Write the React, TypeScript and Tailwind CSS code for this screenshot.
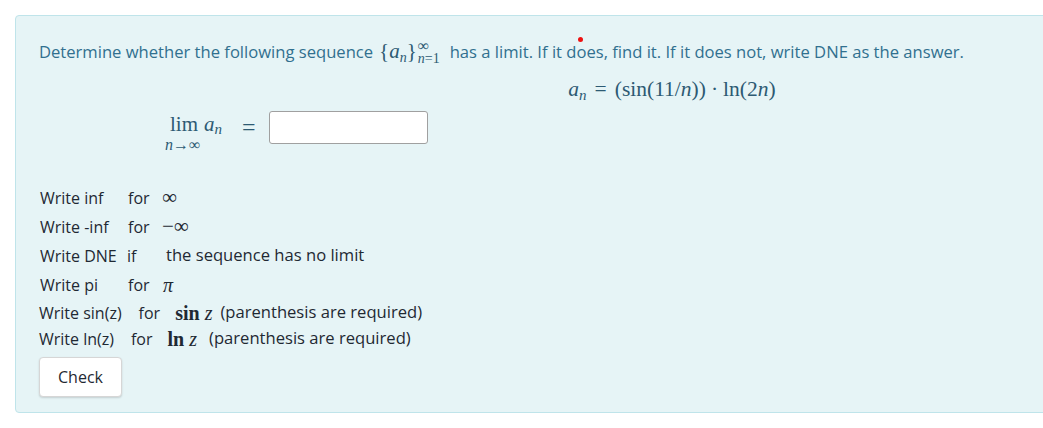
import React from "react";

function M({ children, className = "" }: { children: React.ReactNode; className?: string }) {
  return (
    <span className={`font-['Liberation_Serif',serif] ${className}`}>{children}</span>
  );
}

function I({ children }: { children: React.ReactNode }) {
  return <span className="italic">{children}</span>;
}

export default function App() {
  return (
    <div className="relative w-full h-[428px] overflow-hidden bg-white font-['Open_Sans',sans-serif] text-[16px]">
      <div className="absolute left-[578px] top-[37px] w-[5px] h-[5px] rounded-full bg-[#ee1111]" />
      <div className="pt-[15px] pl-[15px]">
        <div className="w-[1314px] h-[398px] rounded-[4px] border border-[#bfe4ea] bg-[#e6f4f6] px-[23px] pt-[23px]">
          <div className="h-[26px] flex items-center text-[#31708f] whitespace-nowrap text-[16.6px]">
            <span>Determine whether the following sequence</span>
            <M className="ml-[6px] text-[21px] text-[#2d5a73] inline-flex items-center">
              <span>{"{"}</span>
              <I>a</I>
              <span className="italic text-[14px] relative top-[5px]">n</span>
              <span>{"}"}</span>
              <span className="inline-flex flex-col ml-[1px] relative top-[1px]">
                <span className="text-[16px] leading-[12px]">∞</span>
                <span className="text-[14px] leading-[14px]"><I>n</I>=1</span>
              </span>
            </M>
            <span className="ml-[10px]">has a limit. If it does, find it. If it does not, write DNE as the answer.</span>
          </div>
          <div className="mt-[8px] h-[26px] flex justify-center text-[#2d5a73] whitespace-nowrap">
            <M className="text-[21.5px]">
              <I>a</I>
              <span className="italic text-[15px] relative top-[4px]">n</span>
              <span className="mx-[8px]">=</span>
              (sin(11/<I>n</I>))<span className="mx-[5px]">·</span>ln(2<I>n</I>)
            </M>
          </div>
          <div className="mt-[12px] ml-[131px] flex items-start text-[#2d5a73]">
            <M className="flex flex-col items-start">
              <span className="text-[21px] leading-[26px] flex items-baseline">
                lim
                <span className="ml-[6px]">
                  <I>a</I>
                  <span className="italic text-[15px] relative top-[3px]">n</span>
                </span>
              </span>
              <span className="text-[16px] leading-[12px] -ml-[5px]">
                <I>n</I>→∞
              </span>
            </M>
            <M className="text-[24px] leading-[26px] ml-[20px] mt-[3px]">=</M>
            <div className="ml-[13px] mt-[0px] w-[159px] h-[33px] bg-white border border-[#a0a0a0] rounded-[3px]" />
          </div>
          <div className="mt-[32px] text-[#1f2933]">
            <div className="flex h-[29px] items-center">
              <span className="w-[89px] pl-[1px]">Write inf</span>
              <span className="w-[34px]">for</span>
              <M className="text-[21px]">∞</M>
            </div>
            <div className="flex h-[29px] items-center">
              <span className="w-[89px] pl-[1px]">Write -inf</span>
              <span className="w-[34px]">for</span>
              <M className="text-[21px]">−∞</M>
            </div>
            <div className="flex h-[29px] items-center">
              <span className="w-[88px] pl-[1px]">Write DNE</span>
              <span className="w-[39px]">if</span>
              <span className="text-[16.6px]">the sequence has no limit</span>
            </div>
            <div className="flex h-[29px] items-center">
              <span className="w-[89px] pl-[1px]">Write pi</span>
              <span className="w-[35px]">for</span>
              <M className="text-[20px] italic">π</M>
            </div>
            <div className="flex h-[27px] items-center whitespace-nowrap">
              <span>Write sin(z)</span>
              <span className="ml-[17px]">for</span>
              <M className="ml-[15px] text-[20px]">
                <b>sin</b> <I>z</I>
              </M>
              <span className="ml-[8px] text-[16.6px]">(parenthesis are required)</span>
            </div>
            <div className="flex h-[25px] items-center whitespace-nowrap">
              <span>Write ln(z)</span>
              <span className="ml-[17px]">for</span>
              <M className="ml-[15px] text-[20px]">
                <b>ln</b> <I>z</I>
              </M>
              <span className="ml-[12px] text-[16.6px]">(parenthesis are required)</span>
            </div>
          </div>
          <button className="mt-[6px] w-[83px] h-[40px] bg-white border border-[#d6d6d6] rounded-[4px] shadow-[0_1px_2px_rgba(0,0,0,0.15)] text-[#1f2933]">
            Check
          </button>
        </div>
      </div>
    </div>
  );
}
